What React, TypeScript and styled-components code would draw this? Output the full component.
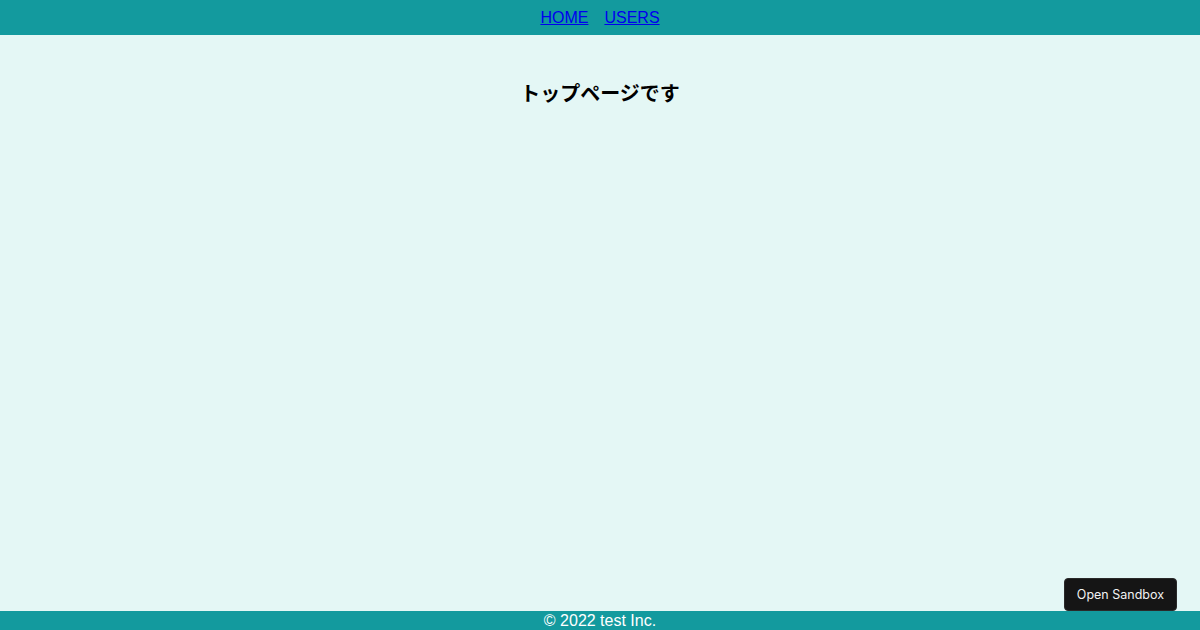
import React from 'react';
import styled, { createGlobalStyle } from 'styled-components';

const GlobalStyle = createGlobalStyle`
  html, body {
    margin: 0;
    padding: 0;
    height: 100%;
  }
  body {
    font-family: "Liberation Sans", Arial, sans-serif;
    background-color: #e4f7f5;
  }
`;

const Page = styled.div`
  display: flex;
  flex-direction: column;
  min-height: 100vh;
`;

const Header = styled.header`
  display: flex;
  justify-content: center;
  gap: 16px;
  padding: 9px 0 8px;
  background-color: #139a9e;
`;

const NavLink = styled.a`
  color: #0000ee;
  font-size: 16px;
  text-decoration: underline;
`;

const Main = styled.main`
  flex: 1;
  display: flex;
  flex-direction: column;
  align-items: center;
  padding-top: 43px;
`;

const Title = styled.h2`
  margin: 0;
  font-size: 20px;
  font-weight: bold;
  color: #000;
  font-family: "Liberation Sans", "Noto Sans CJK JP", sans-serif;
`;

const Footer = styled.footer`
  background-color: #139a9e;
  color: #ffffff;
  text-align: center;
  font-size: 16px;
  line-height: 19px;
`;

// CodeSandbox のオーバーレイボタン
const SandboxButton = styled.a`
  position: fixed;
  right: 23px;
  bottom: 19px;
  display: flex;
  align-items: center;
  height: 33px;
  padding: 0 12px;
  box-sizing: border-box;
  background-color: #151515;
  color: #f2f2f2;
  border: 1px solid #2a2a2a;
  border-radius: 4px;
  font-family: Inter, "Liberation Sans", sans-serif;
  font-size: 12.5px;
  text-decoration: none;
`;

const App: React.FC = () => {
  return (
    <>
      <GlobalStyle />
      <Page>
        <Header>
          <NavLink href="#">HOME</NavLink>
          <NavLink href="#">USERS</NavLink>
        </Header>
        <Main>
          <Title>トップページです</Title>
        </Main>
        <Footer>© 2022 test Inc.</Footer>
      </Page>
      <SandboxButton href="#">Open Sandbox</SandboxButton>
    </>
  );
};

export default App;
